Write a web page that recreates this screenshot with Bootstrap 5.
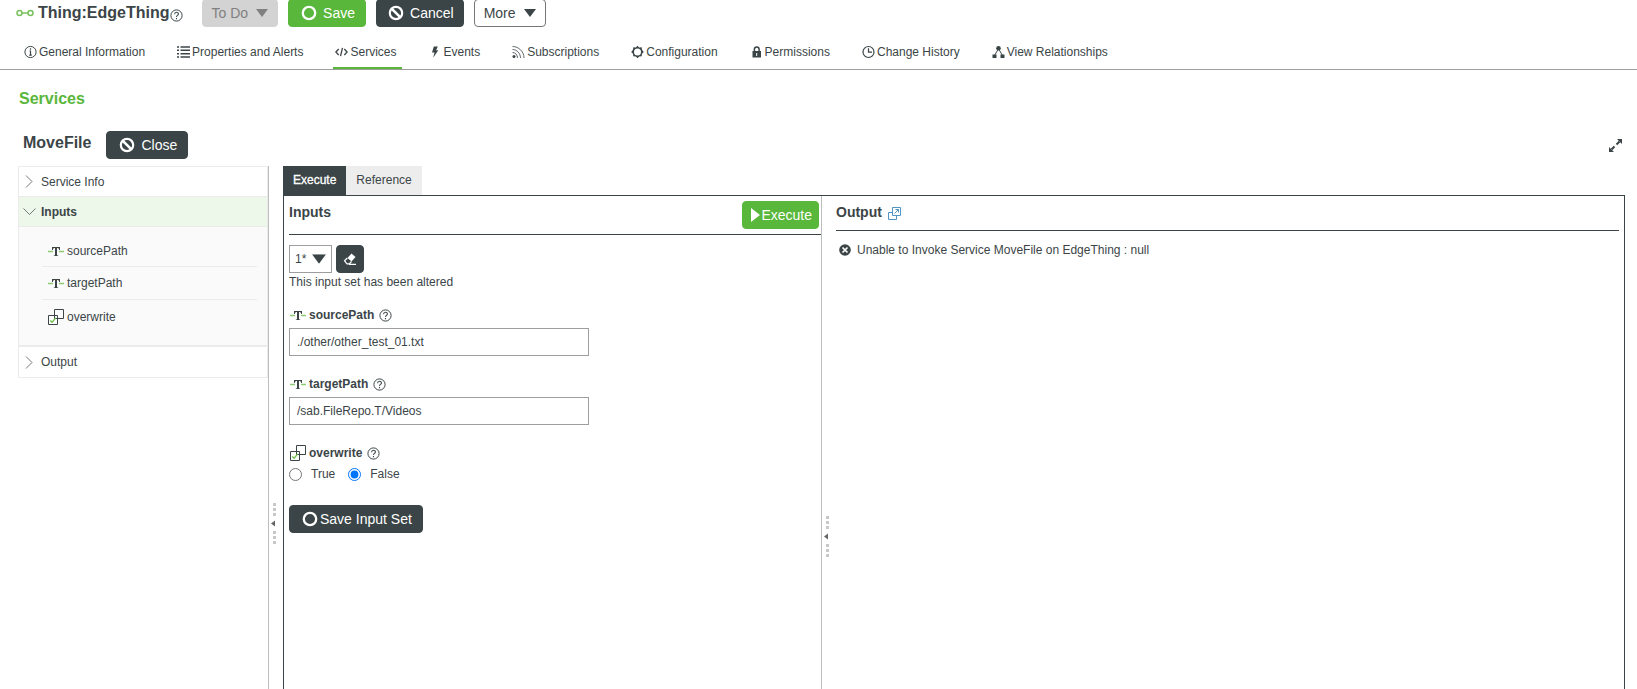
<!DOCTYPE html>
<html lang="en">
<head>
<meta charset="utf-8">
<meta name="viewport" content="width=device-width, initial-scale=1">
<title>Thing:EdgeThing</title>
<link href="https://cdn.jsdelivr.net/npm/bootstrap@5.3.0/dist/css/bootstrap.min.css" rel="stylesheet">
<style>
:root{--ink:#3b4547;--leaf:#59b73b;--rule:#ebebeb;--mid:#9e9e9e}
body{font-family:"Liberation Sans",Arial,sans-serif;font-size:12px;line-height:16px;color:var(--ink);min-height:100vh;overflow:hidden}
svg{display:block;flex:none}
.title-text{font-size:16px;line-height:20px;font-weight:700;margin:0}
.topbar{margin-top:-1px;padding-left:16px}
.topbar-actions{gap:10px;margin-left:19px}
.tool-btn{height:28px;padding:0 10px;font-size:14px;line-height:26px;border-radius:4px;border:1px solid var(--ink);background:var(--ink);color:#fff;display:inline-flex;align-items:center;white-space:nowrap}
.tool-btn.slim{padding:0 9px}
.tool-btn.run{padding:0 6px 0 7px}
.tool-btn.go{background:var(--leaf);border-color:var(--leaf)}
.tool-btn.off{background:#d3d3d3;border-color:#d3d3d3;color:#808080}
.tool-btn.plain{background:#fff;border-color:#777;color:var(--ink)}
.tool-btn.square{width:28px;padding:0;justify-content:center}
.main-tabs{border-bottom:1px solid var(--mid);gap:24px;padding:8px 0 0 22px}
.main-tabs a{display:flex;align-items:center;height:34px;padding:2px 6px 0 2px;gap:1px;color:var(--ink);text-decoration:none;white-space:nowrap;border-bottom:2px solid transparent}
.main-tabs a.active{border-bottom-color:var(--leaf)}
.section-title{color:var(--leaf);padding:19px 0 0 19px}
.service-head{padding:22px 15px 7px 23px;gap:15px}
.side{width:251px;margin-left:18px;border-right:1px solid #bdbdbd;flex:none}
.tree{border:1px solid var(--rule)}
.tree-row{display:flex;align-items:center;width:100%;height:30px;padding:0 4px;gap:4px;border:0;border-bottom:1px solid var(--rule);background:#fff;color:var(--ink);text-align:left}
.tree-row.open{background:#edf7ea;font-weight:700}
.tree-body{background:#fafafa;padding:8px 10px 12px 23px;border-bottom:2px solid var(--rule)}
.tree-body a{display:flex;align-items:center;height:33px;padding-left:6px;gap:3px;border-bottom:1px solid var(--rule);color:var(--ink);text-decoration:none}
.tree-body li:first-child a{height:32px}
.tree-body li:last-child a{border-bottom:0}
.grip{position:absolute}
.side .grip{right:-9px;top:calc(50% + 75px)}
.in-pane .grip{right:-9px;top:calc(50% + 73px)}
.main-area{margin-left:14px}
.sub-tabs button{height:29px;border:0;padding:0 10px 2px;color:var(--ink);background:#ededed}
.sub-tabs button.active{background:var(--ink);color:#fff;-webkit-text-stroke:.3px #fff}
.workspace{border:1px solid var(--ink);border-bottom:0;margin-right:12px}
.in-pane{flex:0 0 40.15%;border-right:1px solid #bdbdbd;padding-left:5px}
.out-pane{padding:0 5px 0 14px}
.pane-title{font-size:14px;line-height:18px;font-weight:700;margin:0}
.in-head{border-bottom:1px solid var(--ink);padding:5px 2px 5px 0;height:39px}
.in-head .pane-title{padding-top:2px}
.out-head{border-bottom:1px solid var(--ink);height:35px;gap:6px;padding-top:7px}
.set-row{gap:4px;margin-top:10px}
.set-pick{position:relative;width:43px;height:28px}
.set-pick select{appearance:none;width:100%;height:100%;border:1px solid var(--mid);background:#fff;color:var(--ink);padding:0 5px;border-radius:0}
.set-pick svg{position:absolute;right:6px;top:9px;pointer-events:none}
.set-note{padding:1px 0 12px}
.field{margin-bottom:15px}
.field-label{display:flex;align-items:center;gap:3px;height:26px;padding-left:1px;font-weight:700}
.field-label label,.field-label span{margin-right:2px}
.field input[type=text]{display:block;width:300px;max-width:100%;height:28px;border:1px solid var(--mid);padding:0 7px;color:var(--ink)}
.field input[type=radio]{width:13px;height:13px;margin:0;accent-color:#0075ff}
.choices{display:flex;align-items:center}
.choices label{margin:0 13px 0 9px}
.save-set{margin-top:8px}
.message{gap:6px;padding:11px 0 0 3px}
</style>
<script src="https://cdn.jsdelivr.net/npm/bootstrap@5.3.0/dist/js/bootstrap.bundle.min.js"></script>
</head>
<body class="d-flex flex-column bg-white">
<svg width="0" height="0" class="position-absolute" aria-hidden="true">
  <symbol id="help" viewBox="0 0 13 13"><circle cx="6.5" cy="6.5" r="5.6" fill="none" stroke="currentColor"/><path d="M4.6 5.2C4.6 2.6 8.4 2.7 8.4 5c0 1.4-1.9 1.4-1.9 3M6.5 9v1.2" fill="none" stroke="currentColor" stroke-width="1.1"/></symbol>
  <symbol id="down" viewBox="0 0 12 8"><path d="M0 0h12L6 8z" fill="currentColor"/></symbol>
  <symbol id="ring" viewBox="0 0 16 16"><circle cx="8" cy="8" r="6.2" fill="none" stroke="currentColor" stroke-width="2.3"/></symbol>
  <symbol id="ban" viewBox="0 0 16 16"><circle cx="8" cy="8" r="6.2" fill="none" stroke="currentColor" stroke-width="2.2"/><path d="M3.8 3.8l8.4 8.4" stroke="currentColor" stroke-width="2.6"/></symbol>
  <symbol id="text-type" viewBox="0 0 16 12"><path d="M0 6.5h5M11 6.5h5" stroke="#8dcc75" stroke-width="1.4"/><path d="M4 2h8v3h-.8c-.2-1.4-.6-2-2.2-2v6.5c0 .8.3 1 1.2 1v.6H5.8v-.6c.9 0 1.2-.2 1.2-1V3c-1.600 0-2 .6-2.200 2H4z" fill="#3b4547"/></symbol>
  <symbol id="bool-type" viewBox="0 0 16 16"><path d="M6.500 .5h9v9h-9zM.5 6.500h9v9h-9z" fill="#fff" stroke="#3b4547"/><path d="M2.300 11.500l1.800 1.700 3.600-4.400" fill="none" stroke="#6cc04a" stroke-width="1.300"/></symbol>
  <symbol id="grip-dots" viewBox="0 0 6 42"><path d="M2 0h3v3H2zM2 5h3v3H2zM2 10h3v3H2zM2 28h3v3H2zM2 33h3v3H2zM2 38h3v3H2z" fill="#c8c8c8"/><path d="M0 20.500l4-3v6z" fill="#666"/></symbol>
</svg>

<header class="topbar d-flex align-items-center">
  <svg width="18" height="8" viewBox="0 0 18 8" fill="none" stroke="#78c25e" stroke-width="1.500"><circle cx="3.500" cy="4" r="2.500"/><circle cx="14.500" cy="4" r="2.500"/><path d="M6 4h6"/></svg>
  <h1 class="title-text ps-1">Thing:EdgeThing</h1>
  <svg class="mt-1" width="13" height="13"><use href="#help"/></svg>
  <div class="topbar-actions d-flex">
    <button class="tool-btn slim off" type="button" disabled>To Do<svg class="ms-2" width="12" height="8"><use href="#down"/></svg></button>
    <button class="tool-btn go" type="button"><svg class="me-1" width="20" height="16"><use href="#ring"/></svg>Save</button>
    <button class="tool-btn slim" type="button"><svg class="me-1" width="20" height="16"><use href="#ban"/></svg>Cancel</button>
    <button class="tool-btn slim plain" type="button">More<svg class="ms-2" width="12" height="8"><use href="#down"/></svg></button>
  </div>
</header>

<nav class="main-tabs d-flex">
  <a href="#"><svg width="14" height="14" viewBox="0 0 14 14"><circle cx="6.500" cy="7" r="5.600" fill="none" stroke="currentColor"/><path d="M6.500 3.300v1.400M5.500 6h1v4M5.200 10.200h2.600" fill="none" stroke="currentColor" stroke-width="1.200"/></svg>General Information</a>
  <a href="#"><svg width="14" height="14" viewBox="0 0 14 14"><path d="M0 2h2M0 5.300h2M0 8.700h2M0 12h2M3.500 2H13M3.500 5.300H13M3.500 8.700H13M3.500 12H13" stroke="currentColor" stroke-width="1.500"/></svg>Properties and Alerts</a>
  <a href="#" class="active" aria-current="page"><svg width="14" height="14" viewBox="0 0 14 14"><path d="M3.700 4L.9 7l2.800 3M9.300 4l2.800 3-2.800 3M7.500 2.800l-2 8.400" fill="none" stroke="currentColor" stroke-width="1.300"/></svg>Services</a>
  <a href="#"><svg width="14" height="14" viewBox="0 0 14 14"><path d="M5.800 1.500h4L8.100 5.300h2.200L5.200 12.800 6.500 7.500H4z" fill="currentColor"/></svg>Events</a>
  <a href="#"><svg width="14" height="14" viewBox="0 0 14 14" fill="none" stroke="currentColor"><circle cx="2" cy="11.500" r="1.500" fill="currentColor" stroke="none"/><path d="M.5 7.500c3 0 5 2.500 5 5.500M.5 4.500c4.500 0 8 4 8 8.500M.5 1.500c6 0 11.500 5 11.500 11.500" stroke-width=".8"/></svg>Subscriptions</a>
  <a href="#"><svg width="14" height="14" viewBox="0 0 14 14"><path d="M6.500.700l1.700 1.800 2.500-.3.300 2.500L12.800 7 11 8.700l-.3 2.500-2.500.3-1.700 1.800-1.700-1.800-2.500-.3L2 8.700.2 7 2 4.700l.3-2.500 2.500.3z" fill="currentColor"/><circle cx="6.500" cy="7" r="3.500" fill="#fff"/></svg>Configuration</a>
  <a href="#"><svg width="14" height="14" viewBox="0 0 14 14"><path d="M2.500 6h8.500v6.500H2.500z" fill="currentColor"/><path d="M4.400 6.500V4.300c0-3 4.700-3 4.700 0v2.200" fill="none" stroke="currentColor" stroke-width="1.500"/><path d="M6.700 8v3" stroke="#fff"/></svg>Permissions</a>
  <a href="#"><svg width="14" height="14" viewBox="0 0 14 14" fill="none" stroke="currentColor" stroke-width="1.200"><circle cx="6.500" cy="7" r="5.500"/><path d="M6.500 3.300V7.200h3.500"/></svg>Change History</a>
  <a href="#"><svg width="14" height="14" viewBox="0 0 14 14"><circle cx="6.500" cy="3.200" r="2.300" fill="currentColor"/><path d="M.5 9.500h4v3.500h-4zM8.500 9.500h4v3.500h-4z" fill="currentColor"/><path d="M6 4.500l-3.500 6M7 4.500l3.500 6" stroke="currentColor"/></svg>View Relationships</a>
</nav>

<h2 class="section-title title-text">Services</h2>
<div class="service-head d-flex align-items-center">
  <h3 class="title-text pb-1">MoveFile</h3>
  <button class="tool-btn" type="button"><svg class="me-1" width="20" height="16"><use href="#ban"/></svg>Close</button>
  <svg class="ms-auto" width="13" height="13" viewBox="0 0 13 13"><path d="M7.500 5.500L10.500 2.500M5.500 7.500L2.500 10.500" stroke="currentColor" stroke-width="2"/><path d="M8 0h5v5zM0 8v5h5z" fill="currentColor"/></svg>
</div>

<div class="d-flex flex-fill">
  <aside class="side position-relative">
    <div class="tree">
      <button class="tree-row" type="button"><svg width="14" height="13" viewBox="0 0 14 13"><path d="M3 .5l6 6-6 6" fill="none" stroke="#777"/></svg>Service Info</button>
      <button class="tree-row open" type="button"><svg width="14" height="13" viewBox="0 0 14 13"><path d="M.5 3.500l6 6 6-6" fill="none" stroke="#777"/></svg>Inputs</button>
      <ul class="tree-body list-unstyled m-0">
        <li><a href="#"><svg width="16" height="12"><use href="#text-type"/></svg>sourcePath</a></li>
        <li><a href="#"><svg width="16" height="12"><use href="#text-type"/></svg>targetPath</a></li>
        <li><a href="#"><svg width="16" height="16"><use href="#bool-type"/></svg>overwrite</a></li>
      </ul>
      <button class="tree-row border-bottom-0" type="button"><svg width="14" height="13" viewBox="0 0 14 13"><path d="M3 .5l6 6-6 6" fill="none" stroke="#777"/></svg>Output</button>
    </div>
    <svg class="grip" width="6" height="42"><use href="#grip-dots"/></svg>
  </aside>

  <main class="main-area d-flex flex-column flex-fill">
    <div class="sub-tabs d-flex"><button class="active" type="button">Execute</button><button type="button">Reference</button></div>
    <div class="workspace d-flex flex-fill">
      <section class="in-pane position-relative">
        <div class="in-head d-flex justify-content-between">
          <h4 class="pane-title">Inputs</h4>
          <button class="tool-btn go run" type="button"><svg width="11" height="14" viewBox="0 0 11 14"><path d="M1 0l9 7-9 7z" fill="#fff"/></svg>Execute</button>
        </div>
        <div class="set-row d-flex">
          <div class="set-pick"><select aria-label="Input set"><option>1*</option></select><svg width="14" height="10" viewBox="0 0 12 8"><use href="#down"/></svg></div>
          <button class="tool-btn square" type="button" aria-label="Clear"><svg width="14" height="14" viewBox="0 0 14 14"><path d="M8.500 1.500l4 3.500-4 4.500-4-3.500z" fill="#fff"/><path d="M4.300 6l-2.800 2.800 2.500 3h2.300L8.500 9.500M6 12.400h7" fill="none" stroke="#fff" stroke-width="1.200"/></svg></button>
        </div>
        <div class="set-note">This input set has been altered</div>
        <div class="field">
          <div class="field-label"><svg width="16" height="12"><use href="#text-type"/></svg><label for="src">sourcePath</label><svg width="13" height="13"><use href="#help"/></svg></div>
          <input id="src" type="text" value="./other/other_test_01.txt">
        </div>
        <div class="field">
          <div class="field-label"><svg width="16" height="12"><use href="#text-type"/></svg><label for="dst">targetPath</label><svg width="13" height="13"><use href="#help"/></svg></div>
          <input id="dst" type="text" value="/sab.FileRepo.T/Videos">
        </div>
        <div class="field" role="group" aria-labelledby="ow">
          <div class="field-label"><svg width="16" height="16"><use href="#bool-type"/></svg><span id="ow">overwrite</span><svg width="13" height="13"><use href="#help"/></svg></div>
          <div class="choices">
            <input id="yes" name="ow" type="radio"><label for="yes">True</label>
            <input id="no" name="ow" type="radio" checked><label for="no">False</label>
          </div>
        </div>
        <button class="tool-btn save-set" type="button"><svg width="20" height="16"><use href="#ring"/></svg>Save Input Set</button>
        <svg class="grip" width="6" height="42"><use href="#grip-dots"/></svg>
      </section>
      <section class="out-pane flex-fill">
        <div class="out-head d-flex">
          <h4 class="pane-title">Output</h4>
          <a href="#" aria-label="Open output" class="pt-1"><svg width="13" height="13" viewBox="0 0 13 13" fill="none" stroke="#4f94c4"><path d="M4.500 .5h8v8h-8V.5zM4.500 5.500h-4v7h8v-4M6.500 6.500l4-4M7.500 2.500h3v3"/></svg></a>
        </div>
        <div class="message d-flex align-items-center"><svg width="12" height="12" viewBox="0 0 12 12"><circle cx="6" cy="6" r="5.800" fill="currentColor"/><path d="M3.500 3.500l5 5M8.500 3.500l-5 5" stroke="#fff" stroke-width="1.700"/></svg>Unable to Invoke Service MoveFile on EdgeThing : null</div>
      </section>
    </div>
  </main>
</div>
</body>
</html>
